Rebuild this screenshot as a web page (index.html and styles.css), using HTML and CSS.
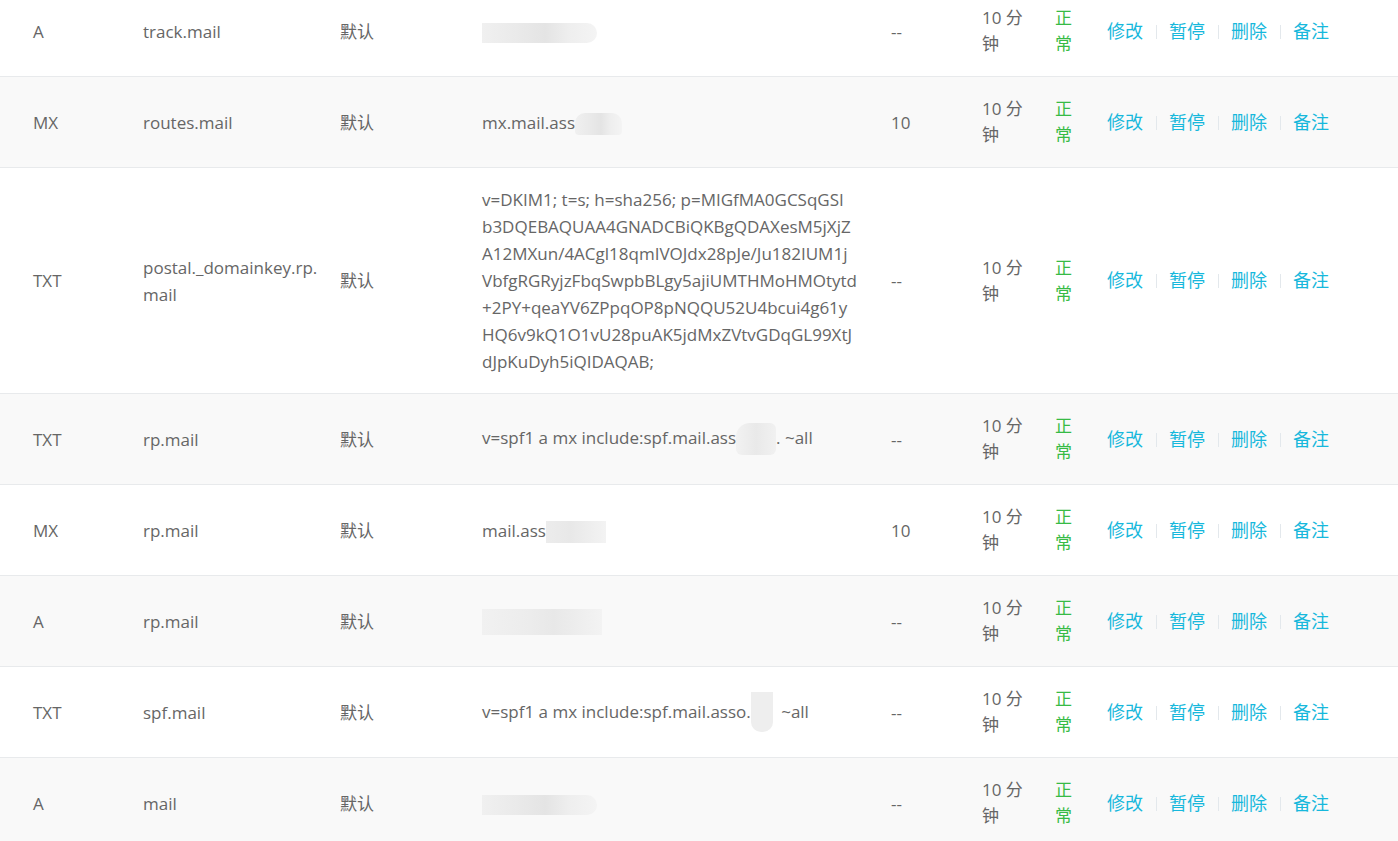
FILE: index.html
```html
<!DOCTYPE html>
<html lang="zh-CN">
<head>
  <meta charset="UTF-8">
  <title>解析记录</title>
  <link rel="stylesheet" href="styles.css">
</head>
<body>
  <div class="record-list">
    <table class="records">
      <colgroup>
        <col class="c-type"><col class="c-host"><col class="c-line"><col class="c-value">
        <col class="c-mx"><col class="c-ttl"><col class="c-state"><col class="c-ops">
      </colgroup>
      <tbody>
        <tr>
          <td>A</td>
          <td>track.mail</td>
          <td>默认</td>
          <td><span class="mask mask-ip"></span></td>
          <td>--</td>
          <td><span class="ttl">10 分钟</span></td>
          <td><span class="state">正常</span></td>
          <td class="ops"><a href="#">修改</a><i></i><a href="#">暂停</a><i></i><a href="#">删除</a><i></i><a href="#">备注</a></td>
        </tr>
        <tr>
          <td>MX</td>
          <td>routes.mail</td>
          <td>默认</td>
          <td>mx.mail.ass<span class="mask mask-mx"></span></td>
          <td>10</td>
          <td><span class="ttl">10 分钟</span></td>
          <td><span class="state">正常</span></td>
          <td class="ops"><a href="#">修改</a><i></i><a href="#">暂停</a><i></i><a href="#">删除</a><i></i><a href="#">备注</a></td>
        </tr>
        <tr>
          <td>TXT</td>
          <td>postal._domainkey.rp.<br>mail</td>
          <td>默认</td>
          <td class="long">v=DKIM1; t=s; h=sha256; p=MIGfMA0GCSqGSI<br>b3DQEBAQUAA4GNADCBiQKBgQDAXesM5jXjZ<br>A12MXun/4ACgl18qmIVOJdx28pJe/Ju182IUM1j<br>VbfgRGRyjzFbqSwpbBLgy5ajiUMTHMoHMOtytd<br>+2PY+qeaYV6ZPpqOP8pNQQU52U4bcui4g61y<br>HQ6v9kQ1O1vU28puAK5jdMxZVtvGDqGL99XtJ<br>dJpKuDyh5iQIDAQAB;</td>
          <td>--</td>
          <td><span class="ttl">10 分钟</span></td>
          <td><span class="state">正常</span></td>
          <td class="ops"><a href="#">修改</a><i></i><a href="#">暂停</a><i></i><a href="#">删除</a><i></i><a href="#">备注</a></td>
        </tr>
        <tr>
          <td>TXT</td>
          <td>rp.mail</td>
          <td>默认</td>
          <td>v=spf1 a mx include:spf.mail.ass<span class="mask mask-spf"></span>. ~all</td>
          <td>--</td>
          <td><span class="ttl">10 分钟</span></td>
          <td><span class="state">正常</span></td>
          <td class="ops"><a href="#">修改</a><i></i><a href="#">暂停</a><i></i><a href="#">删除</a><i></i><a href="#">备注</a></td>
        </tr>
        <tr>
          <td>MX</td>
          <td>rp.mail</td>
          <td>默认</td>
          <td>mail.ass<span class="mask mask-host"></span></td>
          <td>10</td>
          <td><span class="ttl">10 分钟</span></td>
          <td><span class="state">正常</span></td>
          <td class="ops"><a href="#">修改</a><i></i><a href="#">暂停</a><i></i><a href="#">删除</a><i></i><a href="#">备注</a></td>
        </tr>
        <tr>
          <td>A</td>
          <td>rp.mail</td>
          <td>默认</td>
          <td><span class="mask mask-ip square"></span></td>
          <td>--</td>
          <td><span class="ttl">10 分钟</span></td>
          <td><span class="state">正常</span></td>
          <td class="ops"><a href="#">修改</a><i></i><a href="#">暂停</a><i></i><a href="#">删除</a><i></i><a href="#">备注</a></td>
        </tr>
        <tr>
          <td>TXT</td>
          <td>spf.mail</td>
          <td>默认</td>
          <td>v=spf1 a mx include:spf.mail.asso.<span class="mask mask-spf2"></span> ~all</td>
          <td>--</td>
          <td><span class="ttl">10 分钟</span></td>
          <td><span class="state">正常</span></td>
          <td class="ops"><a href="#">修改</a><i></i><a href="#">暂停</a><i></i><a href="#">删除</a><i></i><a href="#">备注</a></td>
        </tr>
        <tr>
          <td>A</td>
          <td>mail</td>
          <td>默认</td>
          <td><span class="mask mask-ip"></span></td>
          <td>--</td>
          <td><span class="ttl">10 分钟</span></td>
          <td><span class="state">正常</span></td>
          <td class="ops"><a href="#">修改</a><i></i><a href="#">暂停</a><i></i><a href="#">删除</a><i></i><a href="#">备注</a></td>
        </tr>
      </tbody>
    </table>
  </div>
</body>
</html>
```

FILE: styles.css
```css
body {
  margin: 0;
  background: #fff;
  color: #666;
  font-family: "Open Sans", "Noto Sans CJK SC", sans-serif;
  font-size: 17px;
  overflow: hidden;
}

/* list is scrolled a little, first row is cut at the top */
.record-list {
  margin-top: -14px;
}

.records {
  width: 1398px;
  border-collapse: collapse;
  table-layout: fixed;
}

.c-type { width: 133px; }
.c-host { width: 197px; }
.c-line { width: 142px; }
.c-value { width: 409px; }
.c-mx { width: 91px; }
.c-ttl { width: 73px; }
.c-state { width: 52px; }
.c-ops { width: 301px; }

.records td {
  height: 54px;
  padding: 18px 10px;
  line-height: 27px;
  vertical-align: middle;
  border-bottom: 1px solid #e8eaec;
  white-space: nowrap;
}

.records td:first-child {
  padding-left: 33px;
}

.records tr:nth-child(even) td {
  background: #f9f9f9;
}

.ttl {
  display: block;
  width: 44px;
  white-space: normal;
  line-height: 26px;
}

.state {
  display: block;
  width: 20px;
  white-space: normal;
  color: #37bb45;
  line-height: 26px;
}

.ops a {
  color: #17b8dc;
  text-decoration: none;
  font-size: 18px;
}

.ops i {
  display: inline-block;
  width: 1px;
  height: 14px;
  margin: 0 12.5px;
  background: #e3e8ec;
  vertical-align: -1px;
}

/* blurred values */
.mask {
  display: inline-block;
  height: 20px;
  vertical-align: middle;
  background: linear-gradient(90deg, #f0f0f0 0, #eaeaea 30%, #e4e4e4 55%, #eeeeee 75%, #f4f4f4 100%);
}

.mask-ip {
  width: 115px;
  border-radius: 0 12px 12px 0;
}

.mask-ip.square {
  width: 120px;
  height: 26px;
  border-radius: 0;
  background: linear-gradient(90deg, #f1f1f1 0, #ececec 40%, #e8e8e8 60%, #f3f3f3 100%);
}

.mask-mx {
  width: 47px;
  height: 22px;
  border-radius: 10px 10px 4px 4px;
}

.mask-spf {
  width: 40px;
  height: 32px;
  border-radius: 14px 6px 6px 6px;
  background: linear-gradient(90deg, #f2f2f2 0, #e9e9e9 50%, #f1f1f1 100%);
}

.mask-host {
  width: 60px;
  height: 22px;
  background: linear-gradient(90deg, #ececec 0, #e8e8e8 40%, #f3f3f3 100%);
}

.mask-spf2 {
  width: 22px;
  height: 40px;
  margin-right: 4px;
  vertical-align: -14px;
  border-radius: 0 0 10px 10px;
  background: #eeeeee;
}
```
